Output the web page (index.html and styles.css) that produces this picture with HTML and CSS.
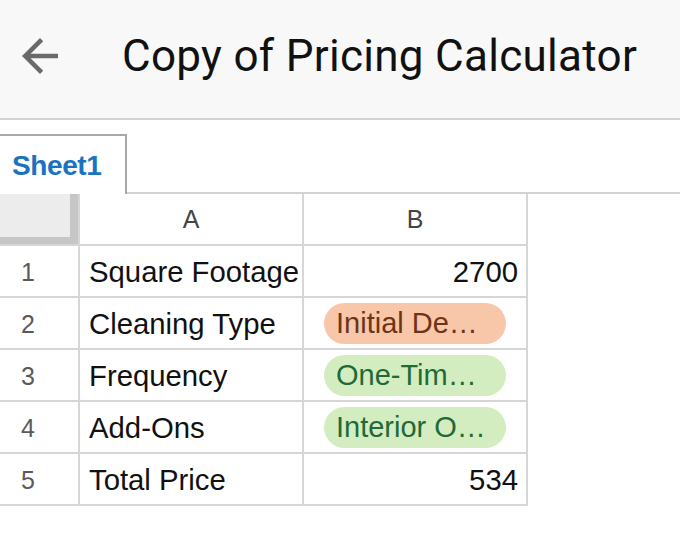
FILE: index.html
```html
<!DOCTYPE html>
<html>
<head>
<meta charset="utf-8">
<link rel="stylesheet" href="styles.css">
</head>
<body>
<div class="appbar">
  <svg class="back" viewBox="0 0 24 24" width="54" height="54"><path d="M20 11H7.83l5.59-5.59L12 4l-8 8 8 8 1.41-1.41L7.83 13H20v-2z" fill="#6a6a6a"/></svg>
  <div class="title">Copy of Pricing Calculator</div>
</div>
<div class="tabbar">
  <div class="tab">Sheet1</div>
</div>
<div class="sheet">
  <div class="grid">
    <div class="corner"><div class="corner-in"></div></div>
    <div class="colhead">A</div>
    <div class="colhead">B</div>

    <div class="rowhead">1</div>
    <div class="cell">Square Footage</div>
    <div class="cell num">2700</div>

    <div class="rowhead">2</div>
    <div class="cell">Cleaning Type</div>
    <div class="cell chipcell"><span class="chip orange">Initial De…</span></div>

    <div class="rowhead">3</div>
    <div class="cell">Frequency</div>
    <div class="cell chipcell"><span class="chip green">One-Tim…</span></div>

    <div class="rowhead">4</div>
    <div class="cell">Add-Ons</div>
    <div class="cell chipcell"><span class="chip green">Interior O…</span></div>

    <div class="rowhead">5</div>
    <div class="cell">Total Price</div>
    <div class="cell num">534</div>
  </div>
</div>
</body>
</html>
```
FILE: styles.css
```css
* { box-sizing: border-box; }
html, body { margin: 0; padding: 0; background: #fff; }
body { width: 680px; height: 540px; overflow: hidden; font-family: "Liberation Sans", Arial, sans-serif; }

.appbar {
  height: 120px;
  background: #f8f8f8;
  border-bottom: 2px solid #d2d2d2;
  display: flex;
  align-items: center;
  padding-left: 13px;
}
.back { flex: none; margin-top: -6px; }
.title {
  font-family: Roboto, sans-serif;
  margin-left: 55px;
  font-size: 44px;
  color: #111;
  margin-top: -6px;
  letter-spacing: 0.3px;
}

.tabbar {
  height: 74px;
  border-bottom: 2px solid #d2d2d2;
  display: flex;
  align-items: flex-end;
}
.tab {
  width: 127px;
  height: 60px;
  border-top: 2px solid #a8a8a8;
  border-right: 2px solid #a8a8a8;
  color: #1a73c0;
  font-weight: 700;
  font-size: 28px;
  padding-left: 12px;
  padding-top: 2px;
  display: flex;
  align-items: center;
  letter-spacing: -0.4px;
  margin-bottom: -2px;
  background: #fff;
}

.sheet { display: flex; }
.grid {
  display: grid;
  grid-template-columns: 78px 222px 222px;
  grid-auto-rows: 50px;
  gap: 2px;
  background: #d6d6d6;
  padding: 0 2px 2px 0;
}
.corner { background: #c6c6c6; }
.corner-in { background: #ececec; width: 70px; height: 43px; }
.colhead, .rowhead, .cell { background: #fff; display: flex; align-items: center; }
.colhead { justify-content: center; font-size: 25px; color: #444; }
.rowhead { font-size: 25px; color: #5a5a5a; justify-content: center; padding-right: 22px; padding-top: 2px; }
.cell { font-size: 29.3px; color: #111; padding-left: 9px; padding-top: 2px; }
.num { justify-content: flex-end; padding-right: 8px; padding-left: 0; }
.chipcell { padding-left: 20px; padding-top: 0; }
.chip {
  display: flex;
  align-items: center;
  width: 182px;
  height: 41px;
  border-radius: 21px;
  padding-left: 12px;
  font-size: 29px;
  padding-top: 1px;
}
.orange { background: #f8c6a9; color: #6e3515; }
.green { background: #d4edc0; color: #1f6a37; }
```
